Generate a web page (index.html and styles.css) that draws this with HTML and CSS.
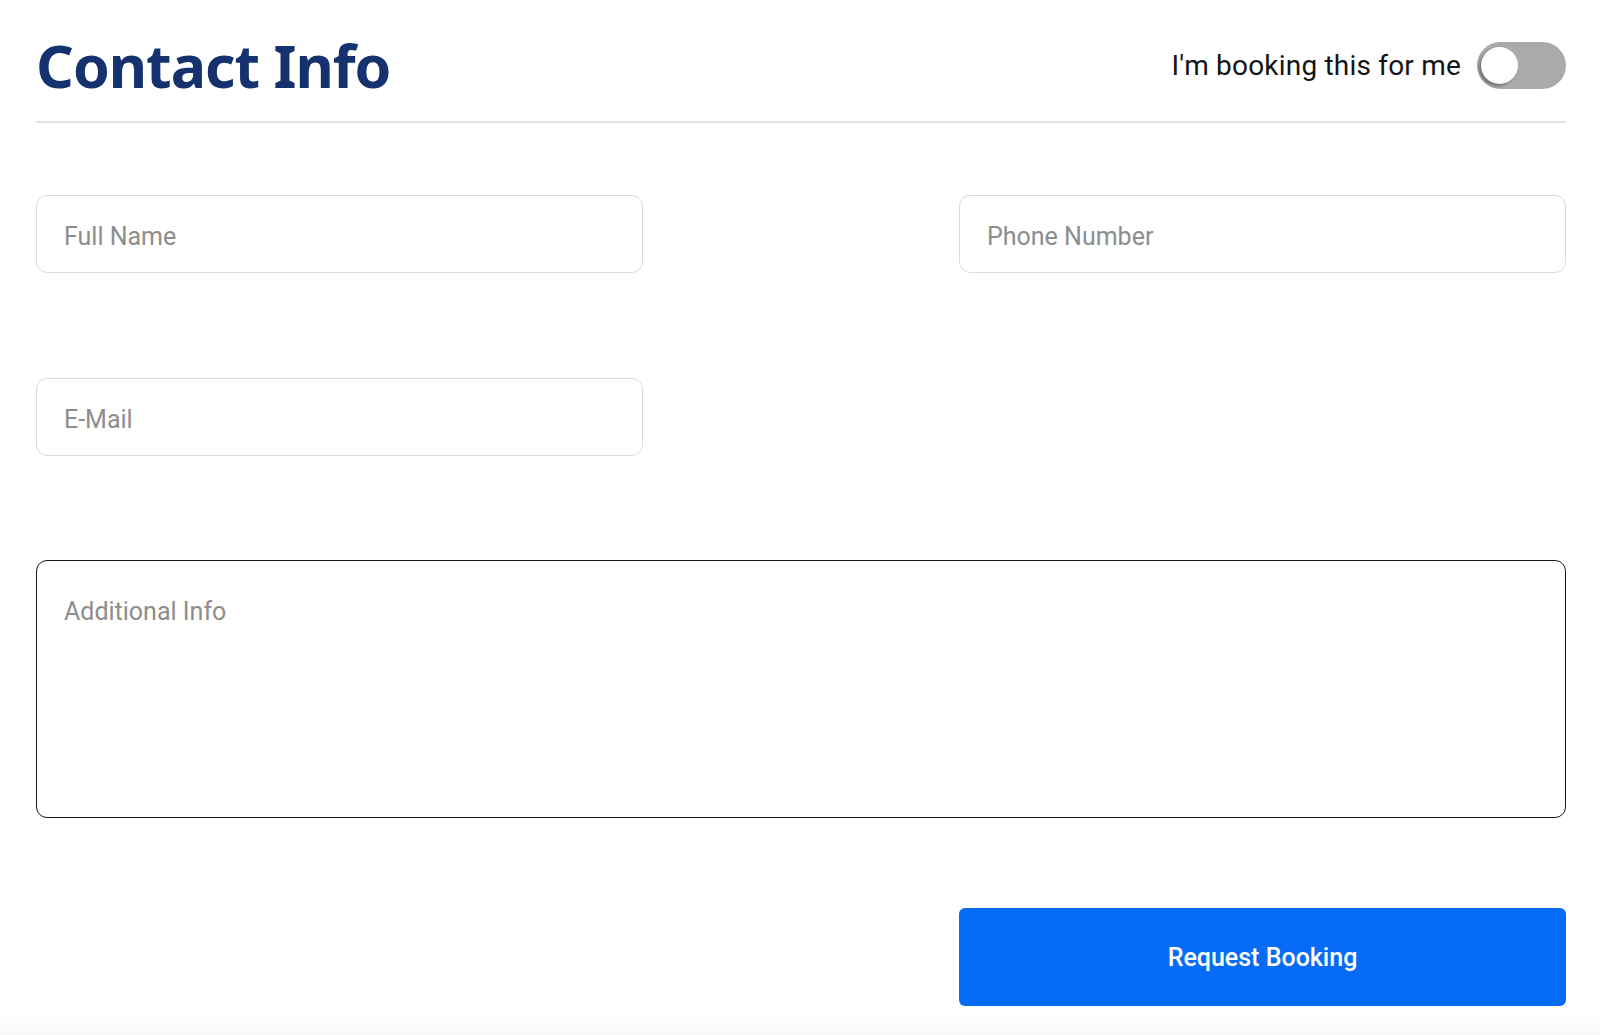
FILE: index.html
```html
<!DOCTYPE html>
<html lang="en">
<head>
    <meta charset="UTF-8">
    <meta name="viewport" content="width=device-width, initial-scale=1.0">
    <title>Contact Info</title>
    <link rel="stylesheet" href="styles.css">
</head>
<body>
    <div class="page">
        <div class="header">
            <h1 class="title">Contact Info</h1>
            <label class="self-toggle">
                <span class="self-toggle-text">I'm booking this for me</span>
                <input type="checkbox" class="switch-input">
                <span class="switch"><span class="switch-knob"></span></span>
            </label>
        </div>

        <form class="contact-form" onsubmit="return false;">
            <div class="row row-first">
                <input class="field" type="text" placeholder="Full Name">
                <input class="field" type="tel" placeholder="Phone Number">
            </div>
            <div class="row row-email">
                <input class="field" type="email" placeholder="E-Mail">
            </div>
            <textarea class="notes" placeholder="Additional Info"></textarea>
            <div class="row row-submit">
                <button class="submit" type="submit">Request Booking</button>
            </div>
        </form>
    </div>
</body>
</html>
```

FILE: styles.css
```css
html, body {
    margin: 0;
    padding: 0;
}
body {
    font-family: Roboto, "Liberation Sans", sans-serif;
    background: linear-gradient(to bottom, #fff 0, #fff 1012px, #f7f7f7 1035px);
    min-height: 1035px;
    color: #111;
}
.page {
    padding: 0 34px 0 36px;
}
.header {
    display: flex;
    align-items: center;
    justify-content: space-between;
    padding: 29px 0 20px;
    border-bottom: 2px solid #e3e3e3;
}
.title {
    margin: 0;
    font-family: "Noto Sans", "Open Sans", sans-serif;
    font-weight: 700;
    font-size: 59px;
    line-height: 72px;
    color: #15326f;
    letter-spacing: -1px;
}
.self-toggle {
    display: flex;
    align-items: center;
    gap: 16px;
    cursor: pointer;
    margin-top: 1px;
}
.self-toggle-text {
    font-size: 28px;
    letter-spacing: 0.2px;
    color: #141414;
}
.switch-input {
    display: none;
}
.switch {
    position: relative;
    width: 89px;
    height: 47px;
    border-radius: 24px;
    background: #abaaa8;
}
.switch-knob {
    position: absolute;
    top: 5px;
    left: 4px;
    width: 37px;
    height: 37px;
    border-radius: 50%;
    background: #fff;
    box-shadow: -2px 2px 3px rgba(0, 0, 0, 0.35);
}
.switch-input:checked + .switch {
    background: #066cf5;
}
.switch-input:checked + .switch .switch-knob {
    left: 48px;
}

.contact-form {
    display: flex;
    flex-direction: column;
}
.row {
    display: flex;
    justify-content: space-between;
}
.row-first {
    margin-top: 72px;
}
.row-email {
    margin-top: 105px;
}
.row-submit {
    justify-content: flex-end;
    margin-top: 91px;
}
.field {
    box-sizing: border-box;
    width: 607px;
    height: 78px;
    padding: 4px 27px 0;
    border: 1.5px solid #d8dbe0;
    border-radius: 11px;
    font-family: Roboto, "Liberation Sans", sans-serif;
    font-size: 25px;
    color: #222;
    outline: none;
}
.field::placeholder,
.notes::placeholder {
    color: #8d8d8d;
}
.notes {
    box-sizing: border-box;
    margin-top: 104px;
    width: 100%;
    height: 258px;
    padding: 36px 27px;
    border: 1.5px solid #1a1a1a;
    border-radius: 11px;
    font-family: Roboto, "Liberation Sans", sans-serif;
    font-size: 25px;
    line-height: 29px;
    resize: none;
    outline: none;
}
.submit {
    width: 607px;
    height: 98px;
    margin-top: -1px;
    border: none;
    border-radius: 6px;
    background: #066cf5;
    color: #fff;
    font-family: Roboto, "Liberation Sans", sans-serif;
    font-weight: 500;
    font-size: 25px;
    cursor: pointer;
}
```
